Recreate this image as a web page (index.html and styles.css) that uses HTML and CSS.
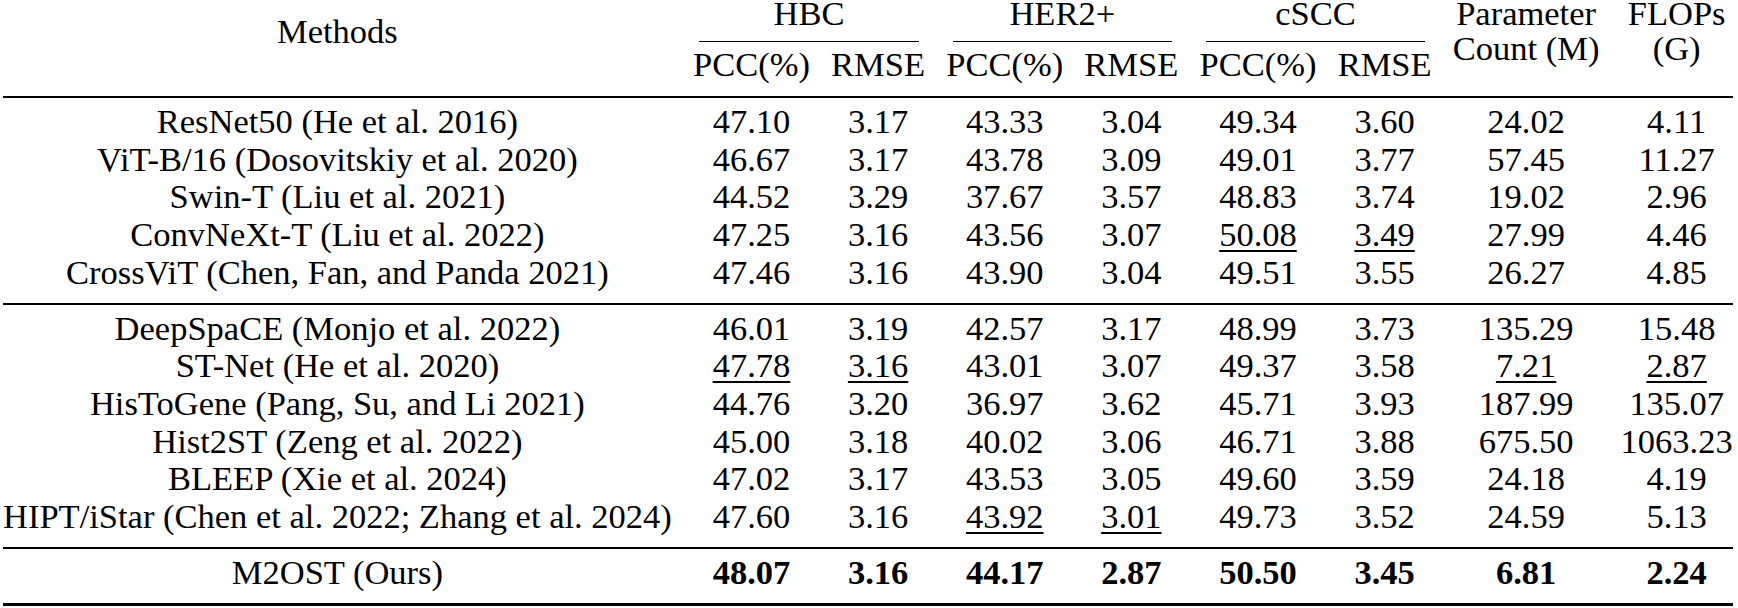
FILE: index.html
```html
<!DOCTYPE html>
<html lang="en">
<head>
    <meta charset="UTF-8">
    <meta name="viewport" content="width=device-width, initial-scale=1.0">
    <title>M2OST comparison table</title>
    <link rel="stylesheet" href="styles.css">
</head>
<body>
    <table class="results">
        <thead>
            <tr class="top">
                <th class="methods" rowspan="2">Methods</th>
                <th class="group" colspan="2">HBC<div class="rule"></div></th>
                <th class="group" colspan="2">HER2+<div class="rule"></div></th>
                <th class="group" colspan="2">cSCC<div class="rule"></div></th>
                <th class="stack" rowspan="2"><span class="first">Parameter</span><span>Count (M)</span></th>
                <th class="stack flops" rowspan="2"><span class="first">FLOPs</span><span>(G)</span></th>
            </tr>
            <tr class="sub">
                <th>PCC(%)</th><th>RMSE</th>
                <th>PCC(%)</th><th>RMSE</th>
                <th>PCC(%)</th><th>RMSE</th>
            </tr>
        </thead>
        <tbody>
            <tr><td>ResNet50 (He et al. 2016)</td><td>47.10</td><td>3.17</td><td>43.33</td><td>3.04</td><td>49.34</td><td>3.60</td><td>24.02</td><td>4.11</td></tr>
            <tr><td>ViT-B/16 (Dosovitskiy et al. 2020)</td><td>46.67</td><td>3.17</td><td>43.78</td><td>3.09</td><td>49.01</td><td>3.77</td><td>57.45</td><td>11.27</td></tr>
            <tr><td>Swin-T (Liu et al. 2021)</td><td>44.52</td><td>3.29</td><td>37.67</td><td>3.57</td><td>48.83</td><td>3.74</td><td>19.02</td><td>2.96</td></tr>
            <tr><td>ConvNeXt-T (Liu et al. 2022)</td><td>47.25</td><td>3.16</td><td>43.56</td><td>3.07</td><td><u>50.08</u></td><td><u>3.49</u></td><td>27.99</td><td>4.46</td></tr>
            <tr><td>CrossViT (Chen, Fan, and Panda 2021)</td><td>47.46</td><td>3.16</td><td>43.90</td><td>3.04</td><td>49.51</td><td>3.55</td><td>26.27</td><td>4.85</td></tr>
        </tbody>
        <tbody class="second">
            <tr><td>DeepSpaCE (Monjo et al. 2022)</td><td>46.01</td><td>3.19</td><td>42.57</td><td>3.17</td><td>48.99</td><td>3.73</td><td>135.29</td><td>15.48</td></tr>
            <tr><td>ST-Net (He et al. 2020)</td><td><u>47.78</u></td><td><u>3.16</u></td><td>43.01</td><td>3.07</td><td>49.37</td><td>3.58</td><td><u>7.21</u></td><td><u>2.87</u></td></tr>
            <tr><td>HisToGene (Pang, Su, and Li 2021)</td><td>44.76</td><td>3.20</td><td>36.97</td><td>3.62</td><td>45.71</td><td>3.93</td><td>187.99</td><td>135.07</td></tr>
            <tr><td>Hist2ST (Zeng et al. 2022)</td><td>45.00</td><td>3.18</td><td>40.02</td><td>3.06</td><td>46.71</td><td>3.88</td><td>675.50</td><td>1063.23</td></tr>
            <tr><td>BLEEP (Xie et al. 2024)</td><td>47.02</td><td>3.17</td><td>43.53</td><td>3.05</td><td>49.60</td><td>3.59</td><td>24.18</td><td>4.19</td></tr>
            <tr><td>HIPT/iStar (Chen et al. 2022; Zhang et al. 2024)</td><td>47.60</td><td>3.16</td><td><u>43.92</u></td><td><u>3.01</u></td><td>49.73</td><td>3.52</td><td>24.59</td><td>5.13</td></tr>
        </tbody>
        <tbody class="ours">
            <tr><td>M2OST (Ours)</td><td>48.07</td><td>3.16</td><td>44.17</td><td>2.87</td><td>50.50</td><td>3.45</td><td>6.81</td><td>2.24</td></tr>
        </tbody>
    </table>
</body>
</html>
```

FILE: styles.css
```css
body {
    margin: 0;
    background: #fff;
    color: #000;
    font-family: "Liberation Serif", "Times New Roman", serif;
}
.results {
    border-collapse: collapse;
    margin-left: 3px;
    font-size: 34.5px;
    border-bottom: 3px solid #000;
}
.results th,
.results td {
    padding: 0 10.6px;
    text-align: center;
    font-weight: normal;
    white-space: nowrap;
}
.results thead {
    border-bottom: 2px solid #000;
}
.top th {
    line-height: 27px;
}
.methods {
    vertical-align: top;
    padding-top: 18px !important;
    padding-left: 0 !important;
}
.group .rule {
    height: 1px;
    background: #000;
    margin: 13.5px 6.5px 5.6px;
}
.stack {
    vertical-align: top;
}
.stack span {
    display: block;
    line-height: 34.5px;
}
.stack .first {
    margin-top: -4px;
}
.flops {
    padding-right: 0 !important;
}
.sub th {
    line-height: 34.5px;
    padding-bottom: 14.4px;
}
.results tbody td {
    line-height: 37.7px;
}
.results tbody td:first-child {
    padding-left: 0;
}
.results tbody td:last-child {
    padding-right: 0;
}
.results tbody tr:first-child td {
    padding-top: 5px;
}
.results tbody tr:last-child td {
    padding-bottom: 11px;
}
.results tbody + tbody {
    border-top: 2px solid #000;
}
.second tr:first-child td {
    padding-top: 6px;
}
.ours td {
    padding-bottom: 12px !important;
}
.ours td + td {
    font-weight: bold;
}
u {
    text-decoration-thickness: 2px;
    text-underline-offset: 4px;
}
```
